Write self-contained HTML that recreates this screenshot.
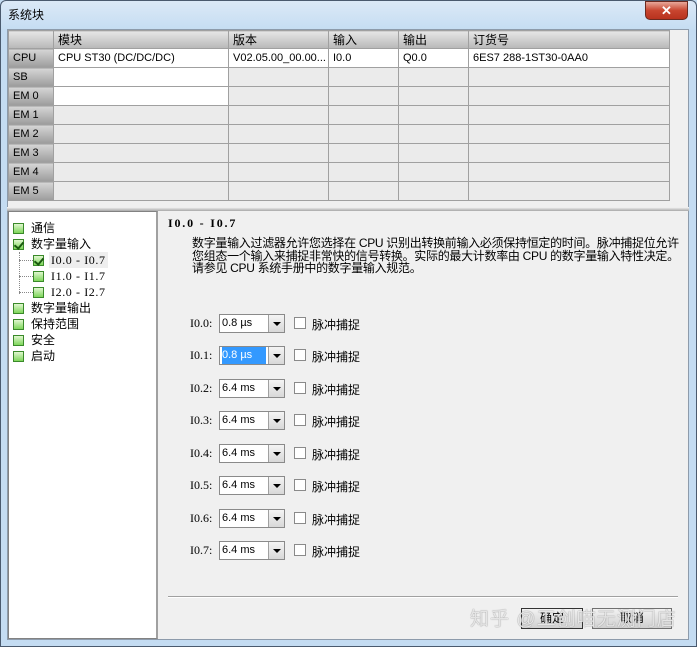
<!DOCTYPE html>
<html><head><meta charset="utf-8"><style>
*{margin:0;padding:0;box-sizing:border-box}
body{width:697px;height:647px;overflow:hidden;background:#c4dcf2;font-family:"Liberation Sans","Noto Sans CJK SC",sans-serif;font-size:12px;color:#000;position:relative}
.abs{position:absolute}
.frame{left:0;top:0;width:697px;height:647px;border:1px solid #4a5a6e;border-radius:6px 6px 0 0;background:linear-gradient(#dbe9f7,#c4dcf2 30px,#c4dcf2)}
.client{left:7px;top:29px;width:682px;height:611px;background:#f0f0f0;border:1px solid #8d9bab}
table{border-collapse:collapse;position:absolute;left:8px;top:30px;width:661px;table-layout:fixed}
td{border:1px solid #a0a0a0;height:19px;padding:0 4px;font-size:11px;background:#ebebeb;white-space:nowrap;overflow:hidden}
tr.h td{height:18px;background:linear-gradient(#e6e6e6,#b8b8b8);font-size:12px}
td.rh{background:linear-gradient(#d6d6d6,#9c9c9c);font-size:11px}
td.w{background:#fff}
.tree{left:8px;top:211px;width:150px;height:428px;background:#fff;border:1px solid #828282;border-right:2px solid #a0a0a0}
.ti{position:absolute;height:16px;line-height:16px;font-size:12px}
.cb{position:absolute;width:11px;height:11px;border:1px solid #3a8a2a;background:linear-gradient(#e0f7d0,#7ed65a);}
.cb.k::after{content:"";position:absolute;left:2px;top:0px;width:4px;height:7px;border:solid #1a5a10;border-width:0 2px 2px 0;transform:rotate(40deg)}
.serif{font-family:"Liberation Serif","Noto Serif CJK SC",serif}
.dd{position:absolute;left:219px;width:66px;height:19px;border:1px solid #8a8a8a;background:#fff;font-size:11px;line-height:17px;padding-left:2px}
.dd .b{position:absolute;right:0;top:0;width:16px;height:17px;background:linear-gradient(#f4f4f4,#d8d8d8);border-left:1px solid #a0a0a0}
.dd .b::after{content:"";position:absolute;left:4px;top:7px;border:4px solid transparent;border-top:4px solid #000;border-bottom:0}
.lbl{position:absolute;left:190px;font-size:12px}
.chk{position:absolute;left:294px;width:12px;height:12px;border:1px solid #8a8a8a;background:#fff}
.pc{position:absolute;left:312px;font-size:12px}
</style></head><body>
<div class="abs frame"></div>
<div class="abs" style="left:8px;top:6px;font-size:12px">系统块</div>
<div class="abs" style="left:645px;top:1px;width:43px;height:19px;border:1px solid #6b2a20;border-radius:0 0 5px 5px;background:linear-gradient(#e8a89a,#c8452f 50%,#b8321e);color:#fff;font-weight:bold;text-align:center;line-height:17px;font-size:13px">✕</div>
<div class="abs client"></div>
<table>
<colgroup><col style="width:45px"><col style="width:175px"><col style="width:100px"><col style="width:70px"><col style="width:70px"><col style="width:201px"></colgroup>
<tr class="h"><td></td><td>模块</td><td>版本</td><td>输入</td><td>输出</td><td>订货号</td></tr>
<tr><td class="rh">CPU</td><td class="w">CPU ST30 (DC/DC/DC)</td><td class="w">V02.05.00_00.00...</td><td class="w">I0.0</td><td class="w">Q0.0</td><td class="w">6ES7 288-1ST30-0AA0</td></tr>
<tr><td class="rh">SB</td><td class="w"></td><td></td><td></td><td></td><td></td></tr>
<tr><td class="rh">EM 0</td><td class="w"></td><td></td><td></td><td></td><td></td></tr>
<tr><td class="rh">EM 1</td><td></td><td></td><td></td><td></td><td></td></tr>
<tr><td class="rh">EM 2</td><td></td><td></td><td></td><td></td><td></td></tr>
<tr><td class="rh">EM 3</td><td></td><td></td><td></td><td></td><td></td></tr>
<tr><td class="rh">EM 4</td><td></td><td></td><td></td><td></td><td></td></tr>
<tr><td class="rh">EM 5</td><td></td><td></td><td></td><td></td><td></td></tr>
</table>
<div class="abs" style="left:7px;top:207px;width:682px;height:4px;background:linear-gradient(#f8f8f8,#a8a8a8)"></div>
<div class="abs tree">
<div class="cb" style="left:4px;top:11px"></div><div class="ti" style="left:22px;top:8px">通信</div>
<div class="cb k" style="left:4px;top:27px"></div><div class="ti" style="left:22px;top:24px">数字量输入</div>
<div class="abs" style="left:10px;top:40px;width:1px;height:42px;border-left:1px dotted #888"></div>
<div class="abs" style="left:10px;top:48px;width:14px;border-top:1px dotted #888"></div>
<div class="abs" style="left:10px;top:64px;width:14px;border-top:1px dotted #888"></div>
<div class="abs" style="left:10px;top:80px;width:14px;border-top:1px dotted #888"></div>
<div class="cb k" style="left:24px;top:43px"></div><div class="ti serif" style="left:40px;top:40px;background:#eee;padding:0 2px;letter-spacing:0.6px">I0.0 - I0.7</div>
<div class="cb" style="left:24px;top:59px"></div><div class="ti serif" style="left:42px;top:56px;letter-spacing:0.6px">I1.0 - I1.7</div>
<div class="cb" style="left:24px;top:75px"></div><div class="ti serif" style="left:42px;top:72px;letter-spacing:0.6px">I2.0 - I2.7</div>
<div class="cb" style="left:4px;top:91px"></div><div class="ti" style="left:22px;top:88px">数字量输出</div>
<div class="cb" style="left:4px;top:107px"></div><div class="ti" style="left:22px;top:104px">保持范围</div>
<div class="cb" style="left:4px;top:123px"></div><div class="ti" style="left:22px;top:120px">安全</div>
<div class="cb" style="left:4px;top:139px"></div><div class="ti" style="left:22px;top:136px">启动</div>
</div>
<div class="abs serif" style="left:168px;top:216px;font-weight:bold;font-size:12px;letter-spacing:1.8px">I0.0 - I0.7</div>
<div class="abs" style="left:192px;top:237px;font-size:12px;line-height:12.5px;width:495px;letter-spacing:-0.3px;white-space:nowrap">数字量输入过滤器允许您选择在 CPU 识别出转换前输入必须保持恒定的时间。脉冲捕捉位允许<br>您组态一个输入来捕捉非常快的信号转换。实际的最大计数率由 CPU 的数字量输入特性决定。<br>请参见 CPU 系统手册中的数字量输入规范。</div>

<div class="lbl serif" style="top:316px">I0.0:</div><div class="dd" style="top:314px">0.8 µs<div class="b"></div></div><div class="chk" style="top:317px"></div><div class="pc" style="top:316px">脉冲捕捉</div>
<div class="lbl serif" style="top:348px">I0.1:</div><div class="dd" style="top:346px"><span style="background:#3399ff;color:#fff;display:inline-block;width:44px">0.8 µs</span><div class="b"></div></div><div class="chk" style="top:349px"></div><div class="pc" style="top:348px">脉冲捕捉</div>
<div class="lbl serif" style="top:381px">I0.2:</div><div class="dd" style="top:379px">6.4 ms<div class="b"></div></div><div class="chk" style="top:382px"></div><div class="pc" style="top:381px">脉冲捕捉</div>
<div class="lbl serif" style="top:413px">I0.3:</div><div class="dd" style="top:411px">6.4 ms<div class="b"></div></div><div class="chk" style="top:414px"></div><div class="pc" style="top:413px">脉冲捕捉</div>
<div class="lbl serif" style="top:446px">I0.4:</div><div class="dd" style="top:444px">6.4 ms<div class="b"></div></div><div class="chk" style="top:447px"></div><div class="pc" style="top:446px">脉冲捕捉</div>
<div class="lbl serif" style="top:478px">I0.5:</div><div class="dd" style="top:476px">6.4 ms<div class="b"></div></div><div class="chk" style="top:479px"></div><div class="pc" style="top:478px">脉冲捕捉</div>
<div class="lbl serif" style="top:511px">I0.6:</div><div class="dd" style="top:509px">6.4 ms<div class="b"></div></div><div class="chk" style="top:512px"></div><div class="pc" style="top:511px">脉冲捕捉</div>
<div class="lbl serif" style="top:543px">I0.7:</div><div class="dd" style="top:541px">6.4 ms<div class="b"></div></div><div class="chk" style="top:544px"></div><div class="pc" style="top:543px">脉冲捕捉</div>

<div class="abs" style="left:168px;top:596px;width:510px;border-top:1px solid #a0a0a0;border-bottom:1px solid #fff"></div>
<div class="abs" style="left:521px;top:608px;width:62px;height:21px;border:1px solid #333;background:linear-gradient(#f2f2f2,#d0d0d0);text-align:center;line-height:19px">确定</div>
<div class="abs" style="left:592px;top:608px;width:80px;height:21px;border:1px solid #707070;background:linear-gradient(#f2f2f2,#d0d0d0);text-align:center;line-height:19px">取消</div>
<div class="abs" style="left:470px;top:604px;font-size:19px;color:rgba(255,255,255,0.8);text-shadow:0 0 1px #666;letter-spacing:1px">知乎 @工创喵无测门店</div>
</body></html>
